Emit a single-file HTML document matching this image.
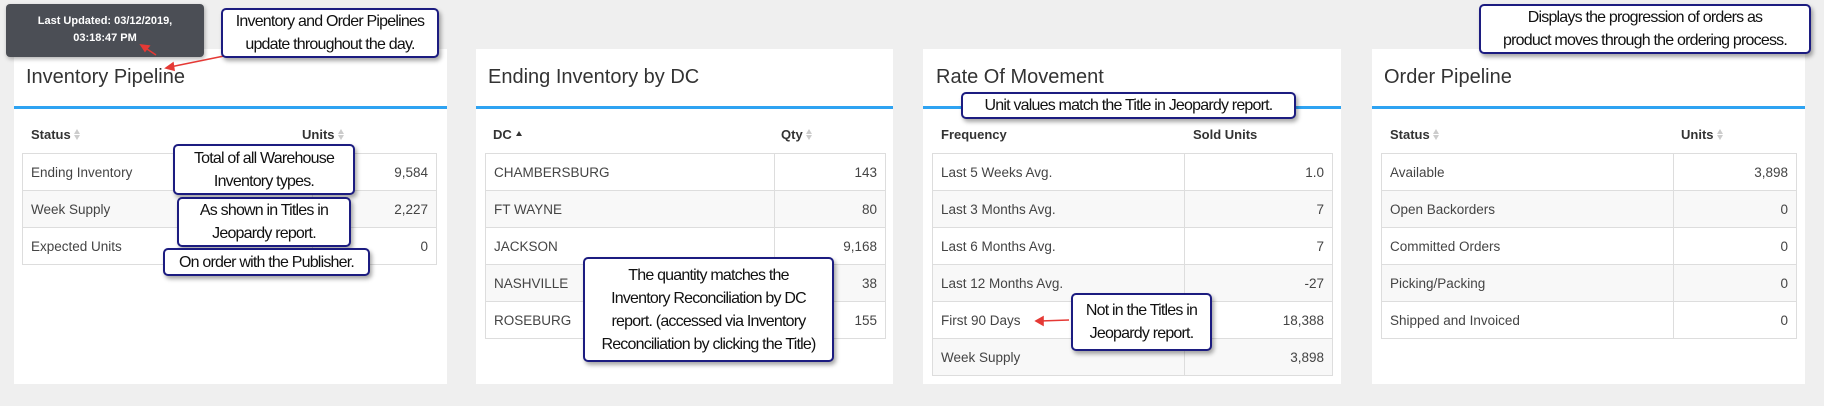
<!DOCTYPE html>
<html><head><meta charset="utf-8"><style>
*{box-sizing:border-box;margin:0;padding:0}
body{width:1824px;height:406px;background:#efefef;position:relative;overflow:hidden;font-family:"Liberation Sans",Arial,sans-serif;color:#333}
.p{position:absolute;top:49px;height:335px;background:#fff}
.t{position:absolute;top:66px;font-size:20px;color:#333}
.bl{position:absolute;top:106px;height:3px;background:#2ea3f2}
.h{position:absolute;top:127px;font-size:13px;font-weight:bold;color:#333}
.s{display:inline-block;width:7px;height:12px;vertical-align:-2px;margin-left:3px;position:relative}
.s:before{content:"";position:absolute;left:0;top:0;border-left:3.5px solid transparent;border-right:3.5px solid transparent;border-bottom:5px solid #ccc}
.s:after{content:"";position:absolute;left:0;top:6px;border-left:3.5px solid transparent;border-right:3.5px solid transparent;border-top:5px solid #ccc}
.up{display:inline-block;margin-left:4px;vertical-align:3px;border-left:3.5px solid transparent;border-right:3.5px solid transparent;border-bottom:5px solid #333}
table{position:absolute;top:153px;border-collapse:collapse;font-size:13.5px;color:#444}
td{height:37px;border:1px solid #ddd;padding:0 8px}
tr:nth-child(even) td{background:#f8f8f8}
td.n{text-align:right}
.c{position:absolute;background:#fff;border:2px solid #1c1c80;border-radius:5px;box-shadow:2px 3px 4px rgba(0,0,0,.35);font-size:16px;letter-spacing:-.8px;color:#111;text-align:center;line-height:23px;display:flex;align-items:center;justify-content:center}
</style></head><body>
<div class="p" style="left:14px;width:433px"></div>
<div class="p" style="left:476px;width:417px"></div>
<div class="p" style="left:923px;width:418px"></div>
<div class="p" style="left:1372px;width:433px"></div>

<div class="t" style="left:26px">Inventory Pipeline</div>
<div class="t" style="left:488px">Ending Inventory by DC</div>
<div class="t" style="left:936px">Rate Of Movement</div>
<div class="t" style="left:1384px">Order Pipeline</div>
<div class="bl" style="left:14px;width:433px"></div>
<div class="bl" style="left:476px;width:417px"></div>
<div class="bl" style="left:923px;width:418px"></div>
<div class="bl" style="left:1372px;width:433px"></div>

<div class="h" style="left:31px">Status<span class="s"></span></div>
<div class="h" style="left:302px">Units<span class="s"></span></div>
<div class="h" style="left:493px">DC<span class="up"></span></div>
<div class="h" style="left:781px">Qty<span class="s"></span></div>
<div class="h" style="left:941px">Frequency</div>
<div class="h" style="left:1193px">Sold Units</div>
<div class="h" style="left:1390px">Status<span class="s"></span></div>
<div class="h" style="left:1681px">Units<span class="s"></span></div>

<table style="left:22px;width:415px"><tr><td>Ending Inventory</td><td class="n">9,584</td></tr><tr><td>Week Supply</td><td class="n">2,227</td></tr><tr><td>Expected Units</td><td class="n">0</td></tr></table>
<table style="left:485px;width:401px"><tr><td style="width:289px">CHAMBERSBURG</td><td class="n">143</td></tr><tr><td>FT WAYNE</td><td class="n">80</td></tr><tr><td>JACKSON</td><td class="n">9,168</td></tr><tr><td>NASHVILLE</td><td class="n">38</td></tr><tr><td>ROSEBURG</td><td class="n">155</td></tr></table>
<table style="left:932px;width:401px"><tr><td style="width:252px">Last 5 Weeks Avg.</td><td class="n">1.0</td></tr><tr><td>Last 3 Months Avg.</td><td class="n">7</td></tr><tr><td>Last 6 Months Avg.</td><td class="n">7</td></tr><tr><td>Last 12 Months Avg.</td><td class="n">-27</td></tr><tr><td>First 90 Days</td><td class="n">18,388</td></tr><tr><td>Week Supply</td><td class="n">3,898</td></tr></table>
<table style="left:1381px;width:416px"><tr><td style="width:292px">Available</td><td class="n">3,898</td></tr><tr><td>Open Backorders</td><td class="n">0</td></tr><tr><td>Committed Orders</td><td class="n">0</td></tr><tr><td>Picking/Packing</td><td class="n">0</td></tr><tr><td>Shipped and Invoiced</td><td class="n">0</td></tr></table>

<div style="position:absolute;left:6px;top:4px;width:198px;height:53px;background:#4b4e55;border-radius:4px;box-shadow:1px 2px 4px rgba(0,0,0,.3);color:#fff;font-size:11px;font-weight:bold;text-align:center;line-height:17px;padding-top:9px">Last Updated: 03/12/2019,<br>03:18:47 PM</div>

<svg style="position:absolute;left:0;top:0" width="1824" height="406"><g stroke="#e53935" stroke-width="1.6" fill="#e53935">
<line x1="224" y1="56" x2="170" y2="67"/><polygon points="166,68 173,63 174,70"/>
<line x1="156" y1="55" x2="144" y2="47"/><polygon points="141,45 149,46 145,51"/>
<line x1="1069" y1="320" x2="1040" y2="321"/><polygon points="1036,321 1043,317 1043,325"/>
</g></svg>

<div class="c" style="left:221px;top:8px;width:218px;height:50px">Inventory and Order Pipelines<br>update throughout the day.</div>
<div class="c" style="left:173px;top:144px;width:182px;height:51px">Total of all Warehouse<br>Inventory types.</div>
<div class="c" style="left:177px;top:197px;width:174px;height:50px">As shown in Titles in<br>Jeopardy report.</div>
<div class="c" style="left:163px;top:248px;width:207px;height:28px">On order with the Publisher.</div>
<div class="c" style="left:583px;top:257px;width:251px;height:105px">The quantity matches the<br>Inventory Reconciliation by DC<br>report.  (accessed via Inventory<br>Reconciliation by clicking the Title)</div>
<div class="c" style="left:961px;top:92px;width:335px;height:27px">Unit values match the Title in Jeopardy report.</div>
<div class="c" style="left:1071px;top:293px;width:141px;height:58px">Not in the Titles in<br>Jeopardy report.</div>
<div class="c" style="left:1479px;top:4px;width:332px;height:50px">Displays the progression of orders as<br>product moves through the ordering process.</div>
</body></html>
